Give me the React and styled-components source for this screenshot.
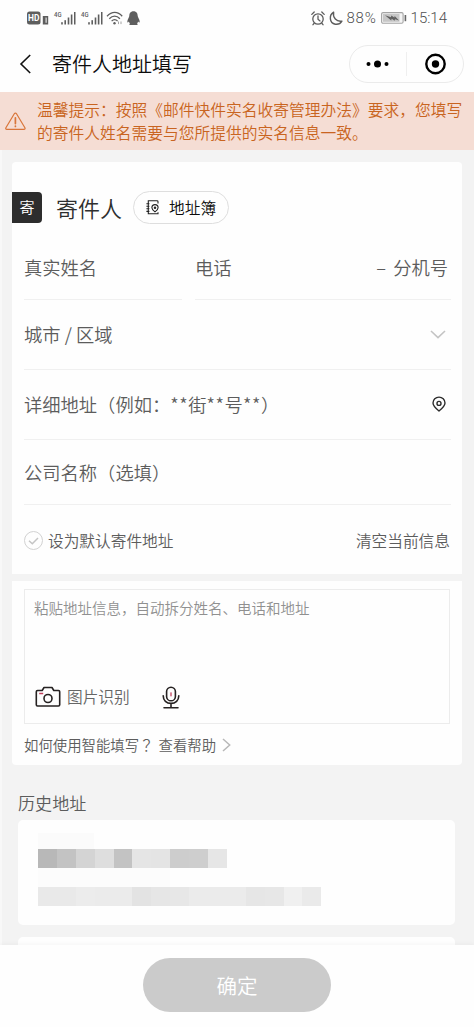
import React from "react";
import styled, { createGlobalStyle } from "styled-components";

const GlobalStyle = createGlobalStyle`
  * { box-sizing: border-box; }
  body {
    margin: 0;
    background: #f3f3f3;
    font-family: "Noto Sans CJK SC", "Noto Sans", sans-serif;
    font-weight: 350;
    color: #5c5c5c;
  }
  svg { display: block; flex: none; }
`;

const Page = styled.div`
  height: 1027px;
  overflow: hidden;
  display: flex;
  flex-direction: column;
`;

const StatusBar = styled.div`
  height: 36px;
  flex: none;
  background: #fefefe;
  display: flex;
  justify-content: space-between;
  align-items: center;
  padding: 0 27px 0 27px;
`;

const StatusGroup = styled.div`
  display: flex;
  align-items: center;
  gap: ${(p) => p.$gap || 0}px;
`;

const StatusText = styled.span`
  font: 300 15px/18px Roboto, sans-serif;
  letter-spacing: ${(p) => p.$spacing || 0}px;
  color: #505050;
  white-space: nowrap;
`;

const NavBar = styled.div`
  height: 56px;
  flex: none;
  background: #fefefe;
  display: flex;
  align-items: center;
  padding: 0 10px 0 19px;
`;

const NavTitle = styled.h1`
  margin: 0 auto 0 20px;
  font-size: 20px;
  line-height: 28px;
  font-weight: 350;
  color: #0c0c0c;
`;

const Capsule = styled.div`
  width: 115px;
  height: 38px;
  border: 1px solid #ebebeb;
  border-radius: 19px;
  display: flex;
  align-items: center;
`;

const CapsuleHalf = styled.div`
  flex: 1;
  height: 24px;
  display: flex;
  align-items: center;
  justify-content: center;
  & + & { border-left: 1px solid #efefef; }
`;

const Notice = styled.div`
  height: 58px;
  flex: none;
  background: #f5ddd4;
  display: flex;
  align-items: center;
  padding-left: 5px;
  gap: 11px;
`;

const NoticeText = styled.p`
  margin: 0;
  font-size: 15.75px;
  line-height: 23.5px;
  color: #c96420;
  white-space: nowrap;
`;

const Content = styled.main`
  flex: 1;
  min-height: 0;
  overflow: hidden;
  padding: 12px 12px 0 10px;
  border-left: 2px solid #f8f8f8;
`;

const Card = styled.section`
  background: #fefefe;
  border-radius: ${(p) => p.$radius};
  height: ${(p) => p.$height}px;
  margin-bottom: ${(p) => p.$gap}px;
`;

const SenderHeader = styled.div`
  height: 74px;
  padding-top: 17px;
  display: flex;
  align-items: center;
`;

const Tag = styled.span`
  width: 30px;
  height: 31px;
  border-radius: 0 4px 4px 0;
  background: #2d2d2d;
  color: #fff;
  font-size: 15px;
  line-height: 30px;
  text-align: center;
`;

const SenderTitle = styled.h2`
  margin: 0 11px 2px 14px;
  font-size: 22px;
  line-height: 32px;
  font-weight: 350;
  color: #2e2e2e;
`;

const BookButton = styled.button`
  width: 96px;
  height: 33px;
  padding: 0 0 0 12px;
  border: 1px solid #dedede;
  border-radius: 17px;
  background: #fefefe;
  display: flex;
  align-items: center;
  gap: 9px;
  font: 350 15.7px/22px "Noto Sans CJK SC", sans-serif;
  color: #0c0c0c;
  white-space: nowrap;
`;

const Fields = styled.div`
  padding: 0 11px 0 12px;
`;

const FieldPair = styled.div`
  display: grid;
  grid-template-columns: 158px 1fr;
  gap: 13px;
`;

const Field = styled.div`
  height: ${(p) => p.$height}px;
  padding-right: ${(p) => p.$end || 0}px;
  padding-bottom: ${(p) => p.$lift || 0}px;
  border-bottom: 1px solid #f0f0f0;
  display: flex;
  align-items: center;
  justify-content: space-between;
  font-size: 18.3px;
  line-height: 26px;
  white-space: pre;
`;

const Stars = styled.span`
  letter-spacing: 0.6px;
`;

const Dash = styled.span`
  margin-right: 3px;
`;

const Options = styled.div`
  height: 70px;
  display: flex;
  align-items: center;
  justify-content: space-between;
  padding: 1px 1px 0 0;
  font-size: 15.7px;
  line-height: 24px;
`;

const CheckLabel = styled.div`
  display: flex;
  align-items: center;
  gap: 5px;
`;

const CheckCircle = styled.span`
  width: 19px;
  height: 19px;
  border: 1px solid #d2d2d2;
  border-radius: 50%;
  display: grid;
  place-items: center;
`;

const PasteCard = styled(Card)`
  padding: 8px 12px 0;
`;

const PasteBox = styled.div`
  height: 135px;
  border: 1px solid #ececec;
  padding: 8px 10px 13px 9px;
  display: flex;
  flex-direction: column;
  justify-content: space-between;
`;

const Placeholder = styled.div`
  font-size: 14.5px;
  line-height: 20px;
  color: #909090;
`;

const Tools = styled.div`
  display: flex;
  align-items: center;
  padding-left: 1px;
  font-size: 15.7px;
  line-height: 26px;
  color: #666;
`;

const ToolName = styled.span`
  margin: 0 32px 0 6px;
`;

const HelpLink = styled.div`
  height: 41px;
  display: flex;
  align-items: center;
  font-size: 14.4px;
  line-height: 22px;
  white-space: nowrap;
`;

const QuestionMark = styled.span`
  font-family: "Noto Sans CJK TC", sans-serif;
`;

const HelpAction = styled.span`
  margin: 0 6px 0 5px;
`;

const HistoryTitle = styled.h3`
  margin: 0 0 5px 6px;
  font-size: 17.1px;
  line-height: 24px;
  font-weight: 350;
  color: #5c5c5c;
`;

const HistoryCard = styled(Card)`
  margin-left: 6px;
  margin-right: 7px;
  padding: 13px 0 0 20px;
`;

const MosaicRow = styled.div`
  display: flex;
  height: ${(p) => p.$height}px;
`;

const MosaicCell = styled.span`
  width: ${(p) => p.$w || 18.9}px;
  background: ${(p) => p.$shade};
`;

const Footer = styled.footer`
  height: 82px;
  flex: none;
  background: #fefefe;
  box-shadow: 0 -1px 4px rgba(0, 0, 0, 0.04);
  display: flex;
  justify-content: center;
  padding-top: 13px;
`;

const Confirm = styled.button`
  width: 188px;
  height: 54px;
  border: 0;
  border-radius: 27px;
  background: #cbcbcb;
  color: #fff;
  font: 350 20.5px/54px "Noto Sans CJK SC", sans-serif;
  padding: 0;
`;

const NAME_SHADES = ["#b8b8b8", "#c3c3c3", "#d4d4d4", "#dedede", "#c3c3c3", "#e5e5e5", "#e4e4e4", "#cdcdcd", "#cecece", "#e6e6e6"];
const ADDRESS_SHADES = ["#e9e9e9", "#e9e9e9", "#ececec", "#ebebeb", "#ebebeb", "#e3e3e3", "#e6e6e6", "#e7e7e7", "#ebebeb", "#ebebeb", "#ebebeb", "#e6e6e6", "#e7e7e7", "#f0f0f0", "#eaeaea"];

const StatusLeftIcons = () => (
  <svg width="114" height="18" viewBox="0 0 114 18" fill="#5e5e5e">
    <rect x="0" y="2.5" width="13.5" height="13" rx="2.5" />
    <text x="6.8" y="12.3" textAnchor="middle" fontFamily="Roboto, sans-serif" fontWeight="700" fontSize="9" textLength="11.4" lengthAdjust="spacingAndGlyphs" fill="#fff">HD</text>
    <path d="M15.8 7h5.400v8.500h-5.400zM17.600 9h1v4.800h1V8.600z" fillRule="evenodd" />
    {[0, 27].map((x) => (
      <g key={x} transform={`translate(${x} 0)`}>
        <text x="27" y="7.800" fontFamily="Roboto, sans-serif" fontWeight="500" fontSize="7" textLength="7.500" lengthAdjust="spacingAndGlyphs">4G</text>
        <rect x="34.200" y="13.200" width="1.600" height="2.300" />
        <rect x="37.400" y="11.200" width="1.600" height="4.300" />
        <rect x="40.700" y="8.500" width="1.600" height="7" />
        <rect x="43.800" y="5.500" width="1.600" height="10" />
        <rect x="47" y="3" width="1.500" height="12.500" />
      </g>
    ))}
    <g fill="none" stroke="#5e5e5e" strokeWidth="1.300">
      <path d="M80 7.200C84.800 2.200 90.800 2.200 95.200 7.200" />
      <path d="M82.300 9.700c3.300-3.400 7.400-3.400 10.600 0" />
      <path d="M84.600 12.100c1.900-1.900 4.200-1.900 6 0" />
    </g>
    <circle cx="87.500" cy="14.300" r="1.200" />
    <path d="M91.500 12.500v2.600M94 12.500v2.600" stroke="#9a9a9a" strokeWidth="0.900" />
    <path d="M106.500 2.200c-3 0-4.200 2.200-4.200 4.700 0 1.200-2 3.300-2 5.800 0 1.300.8.8 1.600-.2.1.8.5 1.400 1 1.900-.7.3-.9 1.700.6 1.700h6c1.500 0 1.300-1.400.6-1.700.5-.5.9-1.100 1-1.900.8 1 1.600 1.500 1.600.2 0-2.500-2-4.600-2-5.800 0-2.500-1.200-4.700-4.200-4.700z" />
  </svg>
);

const AlarmIcon = () => (
  <svg width="14" height="15" viewBox="0 0 14 15" fill="none" stroke="#5c5c5c" strokeWidth="1.3" strokeLinecap="round">
    <circle cx="7" cy="8" r="5.2" />
    <path d="M7 5v3.2l2 1.7M.8 3.4L3.2 1M13.2 3.4L10.8 1M3 12.5l-1 1.2M11 12.5l1 1.2" />
  </svg>
);

const MoonIcon = () => (
  <svg width="14" height="15" viewBox="0 0 14 15" fill="none" stroke="#5c5c5c" strokeWidth="1.4" strokeLinejoin="round">
    <path d="M4.600 1.200C-.2 4.200.3 12.100 6.200 13.200c3.200.5 5.500-.9 6.700-3.100C7.500 11 3.500 6.500 4.600 1.200z" />
  </svg>
);

const BatteryIcon = () => (
  <svg width="26" height="12" viewBox="0 0 26 12">
    <rect x="0.600" y="0.600" width="21.500" height="10.600" rx="1.400" fill="#f4f4f4" stroke="#a4a4a4" strokeWidth="1.100" />
    <rect x="2" y="2" width="16.500" height="7.800" fill="#c6c6c6" />
    <path d="M4 3.200l6 2 .3-1.700 3 2 .4-1.500L18 8.600l-4-1.400-.4 1.600-2.900-2-.5 1.700z" fill="#606060" />
    <rect x="23.600" y="3" width="1.600" height="6.200" fill="#666" />
  </svg>
);

const BackIcon = () => (
  <svg width="13" height="20" viewBox="0 0 13 20" fill="none" stroke="#111" strokeWidth="1.600">
    <path d="M11.200 1L2 10l9.200 9" />
  </svg>
);

const MoreIcon = () => (
  <svg width="24" height="10" viewBox="0 0 24 10">
    <circle cx="2.500" cy="5" r="2" />
    <circle cx="11.500" cy="5" r="3.500" />
    <circle cx="20.500" cy="5" r="2" />
  </svg>
);

const TargetIcon = () => (
  <svg width="22" height="22" viewBox="0 0 22 22">
    <circle cx="11.500" cy="11" r="9.200" fill="none" stroke="#000" strokeWidth="2.400" />
    <circle cx="11.500" cy="11" r="3.700" />
  </svg>
);

const WarningIcon = () => (
  <svg width="21" height="19" viewBox="0 0 21 19" fill="none" stroke="#d9763a" strokeLinejoin="round" strokeLinecap="round">
    <path d="M9.300 1.700L.9 15.800c-.4.800 0 1.600.9 1.600h17.200c.9 0 1.300-.8.9-1.600L11.500 1.700c-.5-.8-1.700-.8-2.200 0z" strokeWidth="1.200" />
    <path d="M10.400 5.800v5.800M10.400 14.100v.3" strokeWidth="1.700" />
  </svg>
);

const BookIcon = () => (
  <svg width="14" height="15" viewBox="0 0 14 15" fill="none" stroke="#222" strokeWidth="1.100">
    <path d="M12 3.500V1.700c0-.5-.3-.9-.9-.9H2.300v13H12v-1.600M.4 3.700h3M.4 6.300h3M.4 8.800h3M.4 11.400h3" />
    <path d="M9 11.900C7 10.300 5.900 9.100 5.900 7.700a3.100 3.100 0 0 1 6.200 0c0 1.400-1.100 2.600-3.100 4.200z" />
    <circle cx="9" cy="7.800" r=".7" />
  </svg>
);

const ChevronDown = () => (
  <svg width="16" height="9" viewBox="0 0 16 9" fill="none" stroke="#c4c4c4" strokeWidth="1.600">
    <path d="M1 1l7 6.600L15 1" />
  </svg>
);

const PinIcon = () => (
  <svg width="14" height="18" viewBox="0 0 14 18" fill="none" stroke="#2c2c2c" strokeWidth="1.400" strokeLinejoin="round">
    <path d="M7 16C3.400 13.100 1 10.800 1 8a6 5.900 0 0 1 12 0c0 2.800-2.400 5.100-6 8z" />
    <circle cx="7" cy="8.400" r="2" />
  </svg>
);

const CheckIcon = () => (
  <svg width="11" height="8" viewBox="0 0 11 8" fill="none" stroke="#c4c4c4" strokeWidth="1.500">
    <path d="M1 3.700l3.300 3L10 1" />
  </svg>
);

const CameraIcon = () => (
  <svg width="26" height="22" viewBox="0 0 26 22" fill="none" stroke="#262222" strokeWidth="1.600" strokeLinejoin="round">
    <path d="M2.500 4.500h4.700L9 1.500h8l1.800 3h4.700c.7 0 1.200.5 1.200 1.200v13.100c0 .7-.5 1.200-1.200 1.200h-21c-.7 0-1.200-.5-1.200-1.200V5.700c0-.7.5-1.200 1.200-1.200z" />
    <circle cx="13" cy="12.500" r="4" />
    <path d="M4.200 7.500h4" stroke="#c23f5c" strokeWidth="1.500" />
  </svg>
);

const MicIcon = () => (
  <svg width="18" height="23" viewBox="0 0 18 23" fill="none" stroke="#262222" strokeWidth="1.600" strokeLinecap="round">
    <rect x="4.600" y="1.200" width="8.800" height="13.600" rx="4.400" />
    <path d="M1.200 9.800c0 4.600 3.300 7.600 7.800 7.600s7.800-3 7.800-7.600M9 17.600v3.800M2 21.700h14" />
    <path d="M9 6.800v3" stroke="#c23f5c" strokeWidth="1.300" />
  </svg>
);

const ChevronRight = () => (
  <svg width="9" height="14" viewBox="0 0 9 14" fill="none" stroke="#b8b8b8" strokeWidth="1.500">
    <path d="M1 1l6.700 6L1 13" />
  </svg>
);

export default function App() {
  return (
    <Page>
      <GlobalStyle />
      <StatusBar>
        <StatusLeftIcons />
        <StatusGroup>
          <StatusGroup $gap={4}>
            <AlarmIcon />
            <MoonIcon />
          </StatusGroup>
          <StatusGroup $gap={4}>
            <StatusText $spacing={0.8}>&thinsp;88%</StatusText>
            <BatteryIcon />
            <StatusText>15:14</StatusText>
          </StatusGroup>
        </StatusGroup>
      </StatusBar>

      <NavBar>
        <BackIcon />
        <NavTitle>寄件人地址填写</NavTitle>
        <Capsule>
          <CapsuleHalf><MoreIcon /></CapsuleHalf>
          <CapsuleHalf><TargetIcon /></CapsuleHalf>
        </Capsule>
      </NavBar>

      <Notice>
        <WarningIcon />
        <NoticeText>
          温馨提示：按照《邮件快件实名收寄管理办法》要求，您填写<br />
          的寄件人姓名需要与您所提供的实名信息一致。
        </NoticeText>
      </Notice>

      <Content>
        <Card $height={412} $gap={7} $radius="4px 4px 0 0">
          <SenderHeader>
            <Tag>寄</Tag>
            <SenderTitle>寄件人</SenderTitle>
            <BookButton><BookIcon />地址簿</BookButton>
          </SenderHeader>
          <Fields>
            <FieldPair>
              <Field $height={64} $lift={2}>真实姓名</Field>
              <Field $height={64} $end={3} $lift={2}>
                <span>电话</span>
                <span><Dash>–</Dash> 分机号</span>
              </Field>
            </FieldPair>
            <Field $height={70} $end={5} $lift={1}>城市 / 区域<ChevronDown /></Field>
            <Field $height={70} $end={5} $lift={1}>
              <span>详细地址（例如：<Stars>**</Stars>街<Stars>**</Stars>号<Stars>**</Stars>）</span>
              <PinIcon />
            </Field>
            <Field $height={65}>公司名称（选填）</Field>
            <Options>
              <CheckLabel>
                <CheckCircle><CheckIcon /></CheckCircle>
                设为默认寄件地址
              </CheckLabel>
              <span>清空当前信息</span>
            </Options>
          </Fields>
        </Card>

        <PasteCard $height={184} $gap={26} $radius="0 0 4px 4px">
          <PasteBox>
            <Placeholder>粘贴地址信息，自动拆分姓名、电话和地址</Placeholder>
            <Tools>
              <CameraIcon />
              <ToolName>图片识别</ToolName>
              <MicIcon />
            </Tools>
          </PasteBox>
          <HelpLink>
            如何使用智能填写<QuestionMark>？</QuestionMark>
            <HelpAction>查看帮助</HelpAction>
            <ChevronRight />
          </HelpLink>
        </PasteCard>

        <HistoryTitle>历史地址</HistoryTitle>
        <HistoryCard $height={105} $gap={12} $radius="5px">
          <MosaicRow $height={16}><MosaicCell $w={56} $shade="#fbfbfb" /></MosaicRow>
          <MosaicRow $height={19}>
            {NAME_SHADES.map((shade, i) => <MosaicCell key={i} $shade={shade} />)}
          </MosaicRow>
          <MosaicRow $height={19}><MosaicCell $w={132} $shade="#fcfcfc" /></MosaicRow>
          <MosaicRow $height={19}>
            {ADDRESS_SHADES.map((shade, i) => <MosaicCell key={i} $shade={shade} />)}
          </MosaicRow>
        </HistoryCard>
        <HistoryCard $height={105} $gap={0} $radius="5px" />
      </Content>

      <Footer>
        <Confirm>确定</Confirm>
      </Footer>
    </Page>
  );
}
